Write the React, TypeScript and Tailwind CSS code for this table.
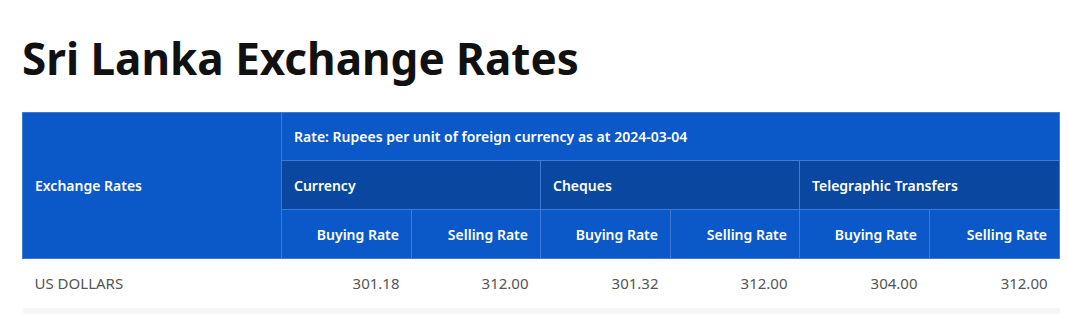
import React from "react";

const rows = [
  { name: "US DOLLARS", values: ["301.18", "312.00", "301.32", "312.00", "304.00", "312.00"] },
  { name: "", values: ["", "", "", "", "", ""] },
];

const groups = ["Currency", "Cheques", "Telegraphic Transfers"];

export default function App() {
  return (
    <div className="min-h-[314px] bg-white px-[22px] pt-[28px] font-['Noto_Sans','Lato',sans-serif]">
      <h1 className="text-[44px] font-bold leading-[60px] text-[#111] mb-[24px]">
        Sri Lanka Exchange Rates
      </h1>

      <table className="w-[1037px] table-fixed border-collapse text-[14px]">
        <colgroup>
          <col className="w-[259px]" />
          <col className="w-[130px]" />
          <col className="w-[129px]" />
          <col className="w-[130px]" />
          <col className="w-[129px]" />
          <col className="w-[130px]" />
          <col className="w-[130px]" />
        </colgroup>
        <thead className="text-white font-semibold">
          <tr className="h-[48px] bg-[#0b58c9]">
            <th
              rowSpan={3}
              className="border border-[#3f7bd6] px-3 text-left font-semibold"
            >
              Exchange Rates
            </th>
            <th colSpan={6} className="border border-[#3f7bd6] px-3 text-left font-semibold">
              Rate: Rupees per unit of foreign currency as at 2024-03-04
            </th>
          </tr>
          <tr className="h-[49px] bg-[#0a47a0]">
            {groups.map((g) => (
              <th
                key={g}
                colSpan={2}
                className="border border-[#3f7bd6] px-3 text-left font-semibold"
              >
                {g}
              </th>
            ))}
          </tr>
          <tr className="h-[49px] bg-[#0b58c9]">
            {groups.flatMap((g) => [
              <th key={g + "b"} className="border border-[#3f7bd6] px-3 text-right font-semibold">
                Buying Rate
              </th>,
              <th key={g + "s"} className="border border-[#3f7bd6] px-3 text-right font-semibold">
                Selling Rate
              </th>,
            ])}
          </tr>
        </thead>
        <tbody className="text-[15px] text-[#555]">
          {rows.map((r, i) => (
            <tr key={i} className={i % 2 === 1 ? "h-[49px] bg-[#f6f6f6]" : "h-[49px] bg-white"}>
              <td className="px-3 text-left">{r.name}</td>
              {r.values.map((v, j) => (
                <td key={j} className="px-3 text-right">
                  {v}
                </td>
              ))}
            </tr>
          ))}
        </tbody>
      </table>
    </div>
  );
}
